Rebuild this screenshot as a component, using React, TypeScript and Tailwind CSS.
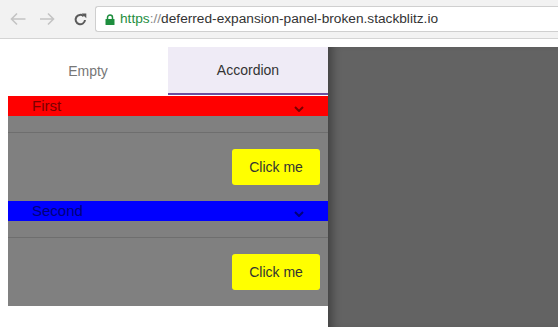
import React from "react";

const font = { fontFamily: '"Liberation Sans", Arial, sans-serif' };

function Chevron({ color }: { color: string }) {
  return (
    <svg width="10" height="6" viewBox="0 0 10 6" className="mt-[10px]">
      <path d="M1 1 L5 5 L9 1" fill="none" stroke={color} strokeWidth="2" />
    </svg>
  );
}

function Panel({ title, bg, fg, stroke }: { title: string; bg: string; fg: string; stroke: string }) {
  return (
    <div>
      <div className={`flex h-5 items-start justify-between pl-6 pr-6 ${bg}`}>
        <span className={`text-[15px] leading-5 ${fg}`}>{title}</span>
        <Chevron color={stroke} />
      </div>
      <div className="bg-[#808080] pt-4">
        <div className="flex justify-end border-t border-[#6e6e6e] pt-4 pb-4 pr-2">
          <button className="h-9 w-[88px] rounded-[3px] bg-[#ffff00] text-[14px] text-[#333]">
            Click me
          </button>
        </div>
      </div>
    </div>
  );
}

export default function App() {
  return (
    <div className="flex h-[327px] w-[558px] flex-col overflow-hidden bg-white" style={font}>
      <div className="flex h-[39px] shrink-0 items-center border-b border-[#d4d4d4] bg-[#f2f2f2]">
        <svg width="16" height="14" viewBox="0 0 16 14" className="ml-[10px]">
          <path d="M15.5 7 H1.5 M7 1.5 L1.5 7 L7 12.5" fill="none" stroke="#c4c4c4" strokeWidth="1.6" />
        </svg>
        <svg width="15" height="14" viewBox="0 0 15 14" className="ml-[14px]">
          <path d="M0 7 H13.5 M8 1.5 L13.5 7 L8 12.5" fill="none" stroke="#c4c4c4" strokeWidth="1.6" />
        </svg>
        <svg width="13" height="14" viewBox="0 0 13 14" className="ml-[19px]">
          <path d="M11 8 A4.7 4.7 0 1 1 9.6 4.2" fill="none" stroke="#5a5a5a" strokeWidth="2" />
          <path d="M7.5 1.5 H12.3 V6.3 Z" fill="#5a5a5a" />
        </svg>
        <div className="ml-[8px] flex h-[26px] flex-1 items-center rounded-l-[3px] border border-r-0 border-[#cfcfcf] bg-white pl-[9px]">
          <svg width="10" height="11" viewBox="0 0 10 11">
            <path d="M2.5 5 V3.5 A2.5 2.5 0 0 1 7.5 3.5 V5" fill="none" stroke="#1e8e3e" strokeWidth="1.5" />
            <rect x="0.5" y="5" width="9" height="6" rx="0.5" fill="#1e8e3e" />
          </svg>
          <span className="ml-[5px] text-[13.7px] text-[#333]">
            <span className="text-[#1e8e3e]">https</span>
            <span className="text-[#888]">://</span>
            deferred-expansion-panel-broken.stackblitz.io
          </span>
        </div>
      </div>
      <div className="flex flex-1 pt-2">
        <div className="w-[328px] shrink-0 pl-2">
          <div className="grid h-12 grid-cols-2 text-[14px]">
            <div className="flex items-center justify-center bg-white text-[#777]">Empty</div>
            <div className="flex items-center justify-center border-b-2 border-[#6a4fa0] bg-[#efebf6] text-[#333]">
              Accordion
            </div>
          </div>
          <div className="mt-px">
            <Panel title="First" bg="bg-[#ff0000]" fg="text-[#7a0000]" stroke="#7a0000" />
            <Panel title="Second" bg="bg-[#0000ff]" fg="text-[#00007a]" stroke="#00007a" />
          </div>
        </div>
        <div className="flex-1 bg-[#636363] shadow-[inset_10px_0_10px_-6px_rgba(0,0,0,0.35)]" />
      </div>
    </div>
  );
}
